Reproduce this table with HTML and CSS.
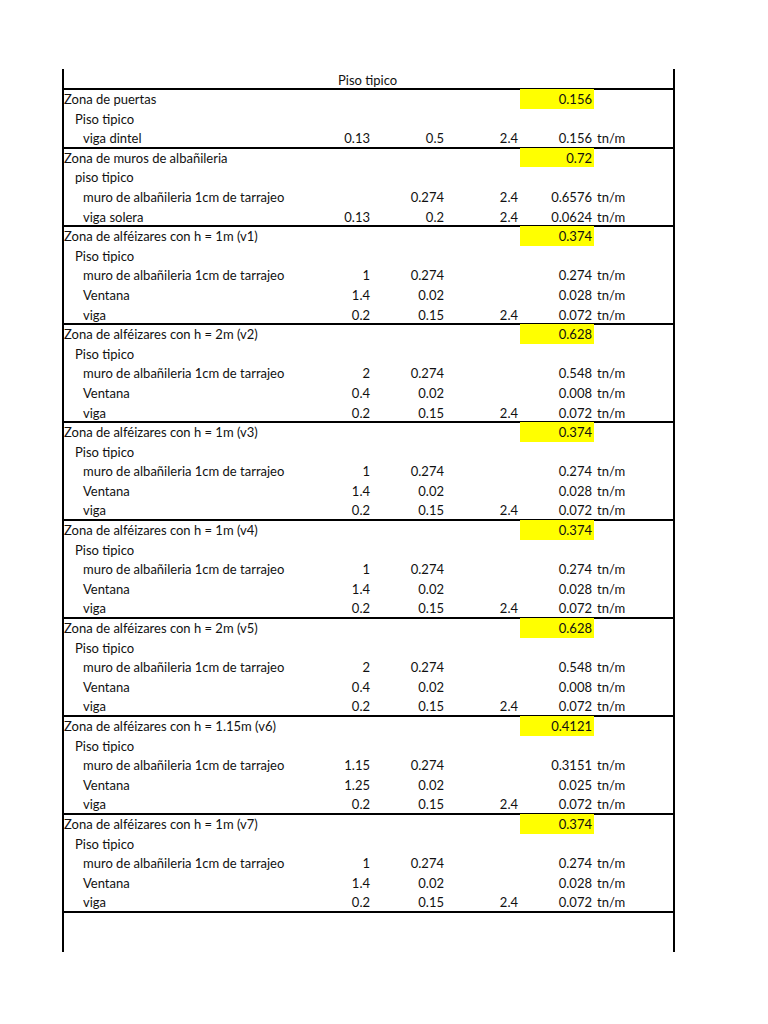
FILE: index.html
```html
<!DOCTYPE html>
<html lang="es">
<head>
<meta charset="utf-8">
<title>Piso tipico</title>
<link rel="stylesheet" href="styles.css">
</head>
<body>
<div class="sheet">
  <div class="head">Piso tipico</div>

  <div class="group">
    <div class="row"><span class="l0">Zona de puertas</span><span></span><span></span><span></span><span class="tot">0.156</span><span></span></div>
    <div class="row"><span class="l1">Piso tipico</span><span></span><span></span><span></span><span></span><span></span></div>
    <div class="row"><span class="l2">viga dintel</span><span class="n">0.13</span><span class="n">0.5</span><span class="n">2.4</span><span class="n e">0.156</span><span class="u">tn/m</span></div>
  </div>

  <div class="group">
    <div class="row"><span class="l0">Zona de muros de albañileria</span><span></span><span></span><span></span><span class="tot">0.72</span><span></span></div>
    <div class="row"><span class="l1">piso tipico</span><span></span><span></span><span></span><span></span><span></span></div>
    <div class="row"><span class="l2">muro de albañileria 1cm de tarrajeo</span><span class="n"></span><span class="n">0.274</span><span class="n">2.4</span><span class="n e">0.6576</span><span class="u">tn/m</span></div>
    <div class="row"><span class="l2">viga solera</span><span class="n">0.13</span><span class="n">0.2</span><span class="n">2.4</span><span class="n e">0.0624</span><span class="u">tn/m</span></div>
  </div>

  <div class="group">
    <div class="row"><span class="l0">Zona de alféizares con h = 1m (v1)</span><span></span><span></span><span></span><span class="tot">0.374</span><span></span></div>
    <div class="row"><span class="l1">Piso tipico</span><span></span><span></span><span></span><span></span><span></span></div>
    <div class="row"><span class="l2">muro de albañileria 1cm de tarrajeo</span><span class="n">1</span><span class="n">0.274</span><span class="n"></span><span class="n e">0.274</span><span class="u">tn/m</span></div>
    <div class="row"><span class="l2">Ventana</span><span class="n">1.4</span><span class="n">0.02</span><span class="n"></span><span class="n e">0.028</span><span class="u">tn/m</span></div>
    <div class="row"><span class="l2">viga</span><span class="n">0.2</span><span class="n">0.15</span><span class="n">2.4</span><span class="n e">0.072</span><span class="u">tn/m</span></div>
  </div>

  <div class="group">
    <div class="row"><span class="l0">Zona de alféizares con h = 2m (v2)</span><span></span><span></span><span></span><span class="tot">0.628</span><span></span></div>
    <div class="row"><span class="l1">Piso tipico</span><span></span><span></span><span></span><span></span><span></span></div>
    <div class="row"><span class="l2">muro de albañileria 1cm de tarrajeo</span><span class="n">2</span><span class="n">0.274</span><span class="n"></span><span class="n e">0.548</span><span class="u">tn/m</span></div>
    <div class="row"><span class="l2">Ventana</span><span class="n">0.4</span><span class="n">0.02</span><span class="n"></span><span class="n e">0.008</span><span class="u">tn/m</span></div>
    <div class="row"><span class="l2">viga</span><span class="n">0.2</span><span class="n">0.15</span><span class="n">2.4</span><span class="n e">0.072</span><span class="u">tn/m</span></div>
  </div>

  <div class="group">
    <div class="row"><span class="l0">Zona de alféizares con h = 1m (v3)</span><span></span><span></span><span></span><span class="tot">0.374</span><span></span></div>
    <div class="row"><span class="l1">Piso tipico</span><span></span><span></span><span></span><span></span><span></span></div>
    <div class="row"><span class="l2">muro de albañileria 1cm de tarrajeo</span><span class="n">1</span><span class="n">0.274</span><span class="n"></span><span class="n e">0.274</span><span class="u">tn/m</span></div>
    <div class="row"><span class="l2">Ventana</span><span class="n">1.4</span><span class="n">0.02</span><span class="n"></span><span class="n e">0.028</span><span class="u">tn/m</span></div>
    <div class="row"><span class="l2">viga</span><span class="n">0.2</span><span class="n">0.15</span><span class="n">2.4</span><span class="n e">0.072</span><span class="u">tn/m</span></div>
  </div>

  <div class="group">
    <div class="row"><span class="l0">Zona de alféizares con h = 1m (v4)</span><span></span><span></span><span></span><span class="tot">0.374</span><span></span></div>
    <div class="row"><span class="l1">Piso tipico</span><span></span><span></span><span></span><span></span><span></span></div>
    <div class="row"><span class="l2">muro de albañileria 1cm de tarrajeo</span><span class="n">1</span><span class="n">0.274</span><span class="n"></span><span class="n e">0.274</span><span class="u">tn/m</span></div>
    <div class="row"><span class="l2">Ventana</span><span class="n">1.4</span><span class="n">0.02</span><span class="n"></span><span class="n e">0.028</span><span class="u">tn/m</span></div>
    <div class="row"><span class="l2">viga</span><span class="n">0.2</span><span class="n">0.15</span><span class="n">2.4</span><span class="n e">0.072</span><span class="u">tn/m</span></div>
  </div>

  <div class="group">
    <div class="row"><span class="l0">Zona de alféizares con h = 2m (v5)</span><span></span><span></span><span></span><span class="tot">0.628</span><span></span></div>
    <div class="row"><span class="l1">Piso tipico</span><span></span><span></span><span></span><span></span><span></span></div>
    <div class="row"><span class="l2">muro de albañileria 1cm de tarrajeo</span><span class="n">2</span><span class="n">0.274</span><span class="n"></span><span class="n e">0.548</span><span class="u">tn/m</span></div>
    <div class="row"><span class="l2">Ventana</span><span class="n">0.4</span><span class="n">0.02</span><span class="n"></span><span class="n e">0.008</span><span class="u">tn/m</span></div>
    <div class="row"><span class="l2">viga</span><span class="n">0.2</span><span class="n">0.15</span><span class="n">2.4</span><span class="n e">0.072</span><span class="u">tn/m</span></div>
  </div>

  <div class="group">
    <div class="row"><span class="l0">Zona de alféizares con h = 1.15m (v6)</span><span></span><span></span><span></span><span class="tot">0.4121</span><span></span></div>
    <div class="row"><span class="l1">Piso tipico</span><span></span><span></span><span></span><span></span><span></span></div>
    <div class="row"><span class="l2">muro de albañileria 1cm de tarrajeo</span><span class="n">1.15</span><span class="n">0.274</span><span class="n"></span><span class="n e">0.3151</span><span class="u">tn/m</span></div>
    <div class="row"><span class="l2">Ventana</span><span class="n">1.25</span><span class="n">0.02</span><span class="n"></span><span class="n e">0.025</span><span class="u">tn/m</span></div>
    <div class="row"><span class="l2">viga</span><span class="n">0.2</span><span class="n">0.15</span><span class="n">2.4</span><span class="n e">0.072</span><span class="u">tn/m</span></div>
  </div>

  <div class="group">
    <div class="row"><span class="l0">Zona de alféizares con h = 1m (v7)</span><span></span><span></span><span></span><span class="tot">0.374</span><span></span></div>
    <div class="row"><span class="l1">Piso tipico</span><span></span><span></span><span></span><span></span><span></span></div>
    <div class="row"><span class="l2">muro de albañileria 1cm de tarrajeo</span><span class="n">1</span><span class="n">0.274</span><span class="n"></span><span class="n e">0.274</span><span class="u">tn/m</span></div>
    <div class="row"><span class="l2">Ventana</span><span class="n">1.4</span><span class="n">0.02</span><span class="n"></span><span class="n e">0.028</span><span class="u">tn/m</span></div>
    <div class="row"><span class="l2">viga</span><span class="n">0.2</span><span class="n">0.15</span><span class="n">2.4</span><span class="n e">0.072</span><span class="u">tn/m</span></div>
  </div>
</div>
</body>
</html>
```

FILE: styles.css
```css
html, body {
  margin: 0;
  padding: 0;
  background: #fff;
}

body {
  font-family: Lato, "Open Sans", sans-serif;
  font-size: 13px;
  color: #111;
}

.sheet {
  box-sizing: border-box;
  width: 613px;
  height: 883px;
  margin: 69px 0 0 62px;
  border-left: 2px solid #000;
  border-right: 2px solid #000;
}

.head {
  box-sizing: border-box;
  height: 21px;
  padding-left: 274px;
  line-height: 22px;
  border-bottom: 2px solid #000;
  margin-bottom: -1px;
}

.group {
  box-shadow: 0 1px 0 0 #000, inset 0 -1px 0 0 #000;
}

.row {
  display: grid;
  grid-template-columns: 236px 70px 74px 76px 74px 79px;
  grid-template-rows: 19.6px;
  height: 19.6px;
  line-height: 21.4px;
  white-space: nowrap;
}

.l0 { padding-left: 0; }
.l1 { padding-left: 11px; }
.l2 { padding-left: 19px; }

.n {
  text-align: right;
}

.row > .n:nth-child(4) {
  padding-right: 2px;
}

.e {
  padding-right: 2px;
}

.tot {
  background: #ffff00;
  text-align: right;
  padding-right: 2px;
}

.u {
  padding-left: 3px;
}
```
